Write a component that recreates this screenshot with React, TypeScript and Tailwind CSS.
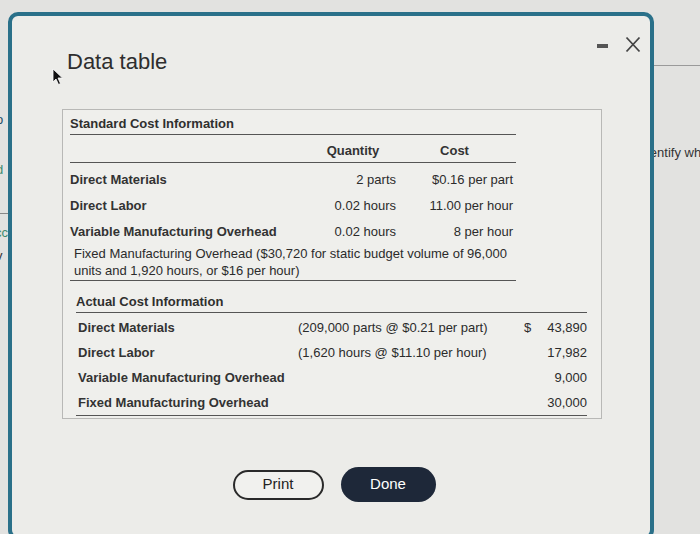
import React from 'react';

const standardRows = [
  { label: 'Direct Materials', qty: '2 parts', cost: '$0.16 per part' },
  { label: 'Direct Labor', qty: '0.02 hours', cost: '11.00 per hour' },
  { label: 'Variable Manufacturing Overhead', qty: '0.02 hours', cost: '8 per hour' },
];

const actualRows = [
  { label: 'Direct Materials', desc: '(209,000 parts @ $0.21 per part)', dollar: true, amount: '43,890' },
  { label: 'Direct Labor', desc: '(1,620 hours @ $11.10 per hour)', dollar: false, amount: '17,982' },
  { label: 'Variable Manufacturing Overhead', desc: '', dollar: false, amount: '9,000' },
  { label: 'Fixed Manufacturing Overhead', desc: '', dollar: false, amount: '30,000' },
];

const Cursor = () => (
  <svg width="12" height="18" viewBox="0 0 12 18" className="absolute left-[40px] top-[52px]">
    <path d="M1 1 L1 14 L4 11 L6.5 16.5 L8.5 15.5 L6 10 L10.5 10 Z" fill="#111" stroke="#fff" strokeWidth="0.8" />
  </svg>
);

const App: React.FC = () => {
  return (
    <div className="relative w-[700px] h-[534px] overflow-hidden bg-[#e2e2e0] font-['Liberation_Sans',Arial,sans-serif] text-[#2b2b2b]">
      {/* page behind the dialog */}
      <div className="absolute left-[648px] top-[65px] w-[60px] border-t border-[#9a9a9a]" />
      <div className="absolute left-[639px] top-[143px] text-[13px] text-[#333] whitespace-nowrap">Identify wh</div>
      <div className="absolute left-[-4px] top-[110px] text-[13px] text-[#244d66]">o</div>
      <div className="absolute left-[-4px] top-[160px] text-[13px] text-[#3c8a6e]">d</div>
      <div className="absolute left-0 top-[213px] w-[10px] border-t border-[#888]" />
      <div className="absolute left-[-5px] top-[223px] text-[13px] text-[#3c8a6e]">cc</div>
      <div className="absolute left-[-4px] top-[246px] text-[13px] text-[#333]">v</div>

      {/* dialog */}
      <div className="absolute left-[8px] top-[12px] w-[646px] h-[528px] rounded-[10px] border-[4px] border-[#2a7089] bg-[#ecece9] flex flex-col">
        <Cursor />
        <div className="absolute left-[585px] top-[28px] w-[11px] h-[4px] bg-[#555]" />
        <svg width="16" height="17" viewBox="0 0 16 17" className="absolute left-[613px] top-[20px]">
          <path d="M1.5 1.5 L14.5 15.5 M14.5 1.5 L1.5 15.5" stroke="#444" strokeWidth="1.8" fill="none" />
        </svg>

        <h1 className="ml-[55px] mt-[33px] text-[22px] leading-[26px] font-normal text-[#2e2e2e]">Data table</h1>

        {/* data box */}
        <div className="ml-[50px] mt-[34px] w-[540px] border border-[#b8b8b6] bg-[#efefec] pl-[7px] pr-[14px] pt-[5px] pb-[2px]">
          <div className="w-[446px]">
            <div className="h-[20px] leading-[18px] text-[13px] font-bold text-[#2f2f2f] border-b border-[#555]">
              Standard Cost Information
            </div>
            <div className="grid grid-cols-[240px_86px_117px] h-[28px] items-end pb-[2px] border-b border-[#555] text-[13px] font-bold text-[#333]">
              <div />
              <div className="text-center">Quantity</div>
              <div className="text-center">Cost</div>
            </div>
            <div className="pt-[4px]">
              {standardRows.map((r) => (
                <div key={r.label} className="grid grid-cols-[240px_86px_117px] h-[26px] items-center text-[13px]">
                  <div className="font-bold text-[#333] whitespace-nowrap">{r.label}</div>
                  <div className="text-right">{r.qty}</div>
                  <div className="text-right">{r.cost}</div>
                </div>
              ))}
            </div>
            <div className="pl-[4px] pb-[1px] text-[13px] leading-[17px] border-b border-[#555]">
              Fixed Manufacturing Overhead ($30,720 for static budget volume of 96,000
              <br />
              units and 1,920 hours, or $16 per hour)
            </div>
          </div>

          <div className="ml-[6px] mt-[12px]">
            <div className="h-[20px] leading-[18px] text-[13px] font-bold text-[#2f2f2f] border-b border-[#555]">
              Actual Cost Information
            </div>
            <div className="pt-[2px] border-b border-[#555]">
              {actualRows.map((r) => (
                <div key={r.label} className="grid grid-cols-[222px_226px_63px] h-[25px] items-center text-[13px]">
                  <div className="pl-[2px] font-bold text-[#333] whitespace-nowrap">{r.label}</div>
                  <div className="whitespace-nowrap">{r.desc}</div>
                  <div className="flex justify-between">
                    <span>{r.dollar ? '$' : ''}</span>
                    <span>{r.amount}</span>
                  </div>
                </div>
              ))}
            </div>
          </div>
        </div>

        {/* buttons */}
        <div className="mt-[48px] flex justify-center items-center gap-[17px] pl-[6px]">
          <button className="w-[91px] h-[30px] rounded-full border-2 border-[#2a2a2a] bg-[#f1f1ee] text-[15px] text-[#222]">
            Print
          </button>
          <button className="w-[95px] h-[35px] rounded-full bg-[#1e2839] text-[15px] font-medium text-white">
            Done
          </button>
        </div>
      </div>
    </div>
  );
};

export default App;
